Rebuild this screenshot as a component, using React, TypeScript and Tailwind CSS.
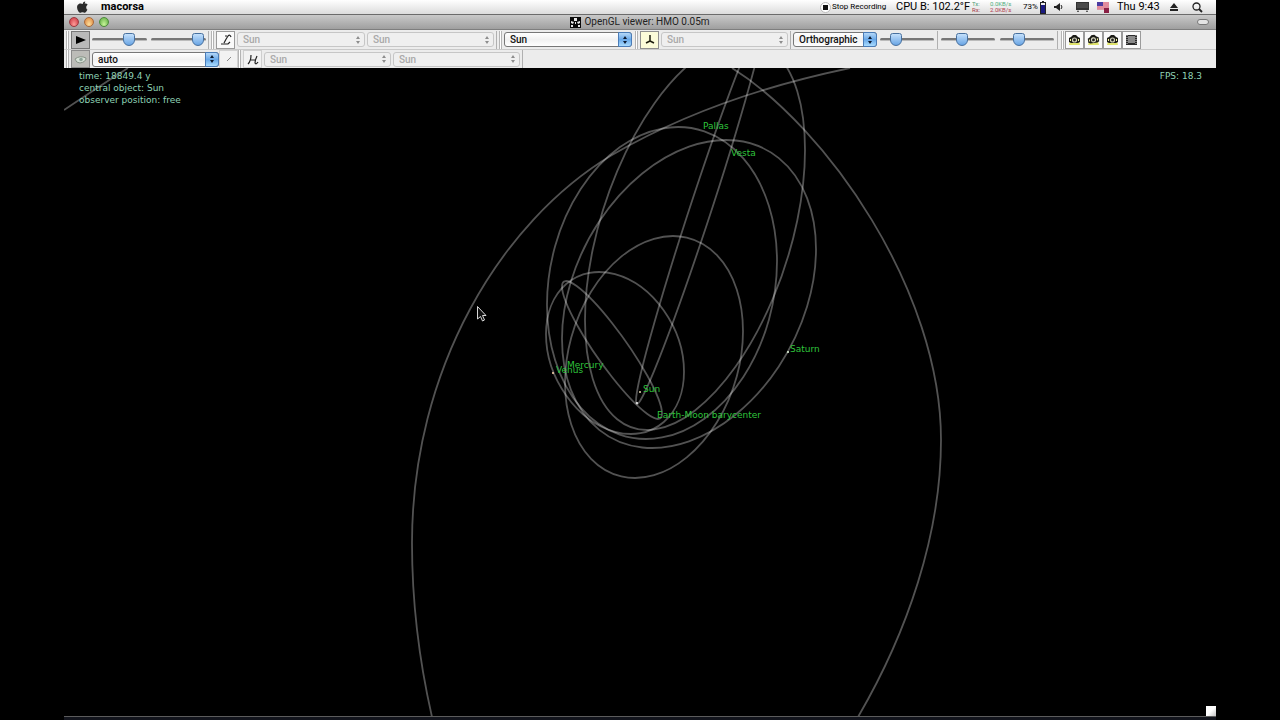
import { useState } from 'react';
import type { ReactNode } from 'react';

interface Orbit {
  cx: number;
  cy: number;
  w: number; // half width of the bounding box
  h: number; // half height of the bounding box
  lean: number; // how far the topmost point sits right of the centre
}

const ORBITS: Orbit[] = [
  { cx: 654, cy: 357, w: 89, h: 121, lean: 19 },
  { cx: 615, cy: 353, w: 69, h: 81, lean: -16 },
  { cx: 662, cy: 283, w: 115, h: 156, lean: 16 },
  { cx: 689, cy: 294, w: 127, h: 154, lean: 37 },
  { cx: 695, cy: 235, w: 110, h: 195, lean: 48 },
  { cx: 612, cy: 350, w: 50, h: 69, lean: -46 },
  { cx: 700, cy: 211, w: 64, h: 193, lean: 63 }
];

const OUTER_ORBITS = [
  'M850 68 C768 85 684 113 612 155 C500 222 412 370 412 543 C412 602 419 660 432 717',
  'M732 68 C826 127 941 290 941 440 C941 535 907 633 858 717',
  'M64 110 C85 96 106 82 128 68'
];

const LABELS = [
  { name: 'Pallas', x: 703, y: 129 },
  { name: 'Vesta', x: 731, y: 156 },
  { name: 'Saturn', x: 790, y: 352 },
  { name: 'Venus', x: 556, y: 373 },
  { name: 'Mercury', x: 567, y: 368 },
  { name: 'Sun', x: 643, y: 392 },
  { name: 'Earth-Moon barycenter', x: 657, y: 418 }
];

const BODIES = [
  { x: 553, y: 373, color: '#ffd9b0' },
  { x: 640, y: 392, color: '#e8d9b0' },
  { x: 637, y: 403, color: '#ffffff' },
  { x: 788, y: 352, color: '#e8ffe0' }
];

function orbitMatrix({ cx, cy, w, h, lean }: Orbit) {
  const skew = (-lean * h) / w;
  const rest = Math.sqrt(h * h - skew * skew);
  return `matrix(${w} ${skew} 0 ${rest} ${cx} ${cy})`;
}

const Handle = () => (
  <div className="h-[18px] w-[3px] shrink-0 border-x border-[#b4b4b4] bg-white" />
);

const Divider = () => <div className="h-[18px] w-px shrink-0 bg-[#b0b0b0]" />;

interface PickerProps {
  label: string;
  value: string;
  width?: string;
  disabled?: boolean;
}

const Picker = ({ label, value, width = 'w-[127px]', disabled = false }: PickerProps) => (
  <div className={`relative h-[15px] shrink-0 ${width}`}>
    <select
      aria-label={label}
      disabled={disabled}
      defaultValue={value}
      className={`block h-[15px] w-full appearance-none rounded-[3px] border pl-[5px] text-[10px] leading-[13px] font-medium opacity-100
        ${disabled
          ? 'border-[#c6c6c6] bg-[#efefef] text-[#a9a9a9]'
          : 'border-[#777] bg-linear-to-b from-white via-[#f1f1f1] to-white text-[#111]'}`}
    >
      <option>{value}</option>
    </select>
    <div
      className={`pointer-events-none absolute top-0 right-0 flex h-[15px] w-[14px] items-center justify-center rounded-r-[3px]
        ${disabled ? '' : 'border border-[#4a7cb8] bg-linear-to-b from-[#b5d8f8] via-[#69a8e8] to-[#a9dcff]'}`}
    >
      <svg className="h-[8px] w-[6px]" viewBox="0 0 6 8" fill={disabled ? '#8d8d8d' : '#0c1a30'}>
        <path d="M3 0 L5 3 H1 Z M3 8 L5 5 H1 Z" />
      </svg>
    </div>
  </div>
);

const Slider = ({ label, start, width = 'w-[54px]' }: { label: string; start: number; width?: string }) => {
  const [value, setValue] = useState(start);
  return (
    <input
      type="range"
      aria-label={label}
      value={value}
      onChange={(e) => setValue(Number(e.target.value))}
      className={`block h-[14px] shrink-0 appearance-none bg-transparent ${width}
        [&::-webkit-slider-runnable-track]:h-[3px] [&::-webkit-slider-runnable-track]:rounded-full [&::-webkit-slider-runnable-track]:border-b [&::-webkit-slider-runnable-track]:border-[#bbb] [&::-webkit-slider-runnable-track]:bg-[#777]
        [&::-webkit-slider-thumb]:-mt-[5px] [&::-webkit-slider-thumb]:h-[13px] [&::-webkit-slider-thumb]:w-[12px] [&::-webkit-slider-thumb]:appearance-none [&::-webkit-slider-thumb]:rounded-[3px_3px_7px_7px] [&::-webkit-slider-thumb]:border [&::-webkit-slider-thumb]:border-[#47709f] [&::-webkit-slider-thumb]:bg-linear-to-b [&::-webkit-slider-thumb]:from-[#c4e0fb] [&::-webkit-slider-thumb]:to-[#69a5e4]`}
    />
  );
};

interface ToolButtonProps {
  label: string;
  look?: string;
  children: ReactNode;
}

const ToolButton = ({ label, look = 'border-[#9b9b9b] bg-[#fafafa]', children }: ToolButtonProps) => (
  <button
    type="button"
    aria-label={label}
    className={`flex h-[18px] w-[19px] shrink-0 items-center justify-center border ${look}`}
  >
    {children}
  </button>
);

const CameraIcon = ({ tilt }: { tilt: number }) => (
  <svg className="h-[14px] w-[15px]" viewBox="0 0 15 14">
    <path d="M2 12 L3 8 H12 L13 12 Z" fill="#dfe36b" />
    <g transform={`rotate(${tilt} 7 7)`}>
      <path d="M2 5 L4 4 L6 2 H9 L11 4 L13 5 V9 L11 10 H4 L2 9 Z" fill="#1b1b16" />
      <circle cx="7.500" cy="7" r="2.600" fill="#d4d4bc" />
      <circle cx="7.500" cy="7" r="1.400" fill="#222" />
      <path d="M3 6 H4 V8 H3 Z M11 6 H12 V8 H11 Z" fill="#f4f49a" />
    </g>
  </svg>
);

const MenuBar = () => (
  <header className="flex h-[15px] shrink-0 items-center border-b border-[#6b6b6b] bg-linear-to-b from-white to-[#dcdcdc] text-black">
    <svg className="ml-[13px] h-[12px] w-[12px]" viewBox="0 0 24 24" fill="#2b2b2b">
      <path d="M16.4 1c.1 1.600-.5 3-1.400 4-1 1.100-2.300 1.800-3.600 1.700-.2-1.500.5-3 1.400-4C13.700 1.700 15.200 1 16.400 1zM21 17.200c-.6 1.300-.9 1.900-1.600 3-1 1.600-2.500 3.500-4.300 3.500-1.600 0-2-1-4.200-1s-2.700 1-4.200 1c-1.800 0-3.200-1.700-4.200-3.300C-.3 16-.6 10.800 1.300 8.100 2.600 6.100 4.700 5 6.700 5c2 0 3.300 1.100 4.900 1.100C13.200 6.100 14.200 5 16.600 5c1.800 0 3.600 1 4.900 2.600-4.300 2.400-3.600 8.500-.5 9.600z" />
    </svg>
    <span className="ml-[12px] text-[11px] leading-[14px] font-bold">macorsa</span>
    <div className="ml-auto flex h-full items-center">
      <div className="flex w-[71px] items-center gap-px">
        <svg className="h-[11px] w-[11px] shrink-0" viewBox="0 0 11 11">
          <circle cx="5.500" cy="5.500" r="5" fill="#fff" stroke="#bbb" />
          <rect x="3" y="3" width="5" height="5" fill="#111" />
        </svg>
        <span className="text-[8px] whitespace-nowrap">Stop Recording</span>
      </div>
      <span className="w-[76px] pl-[5px] text-[11px] whitespace-nowrap">CPU B: 102.2°F</span>
      <div className="flex w-[51px] pl-[5px] text-[6px] leading-[6px]">
        <div className="w-[18px]">
          <p className="text-[#4f9d78]">Tx:</p>
          <p className="text-[#a33a4a]">Rx:</p>
        </div>
        <div>
          <p className="text-[#4fae80]">0.0KB/s</p>
          <p className="text-[#b03a4e]">2.0KB/s</p>
        </div>
      </div>
      <span className="w-[22px] pl-[5px] text-[8px]">73%</span>
      <svg className="mr-[8px] h-[13px] w-[6px]" viewBox="0 0 6 13">
        <path d="M2 0 H4 V1 H6 V13 H0 V1 H2 Z" fill="#222" />
        <rect x="1" y="2" width="4" height="2" fill="#eee" />
        <rect x="1" y="4" width="4" height="8" fill="#1a1a80" />
      </svg>
      <svg className="mr-[12px] h-[8px] w-[10px]" viewBox="0 0 10 8" fill="#222">
        <path d="M0 3 H2 L6 0 V8 L2 5 H0 Z" />
        <path d="M7 2 Q9 4 7 6" fill="none" stroke="#222" />
      </svg>
      <svg className="mr-[8px] h-[10px] w-[13px]" viewBox="0 0 13 10">
        <rect x="0" y="0" width="13" height="8" fill="#333" />
        <rect x="1" y="1" width="11" height="5" fill="#4a4a4a" />
        <path d="M2 8 L1 10 H3 Z M11 8 L10 10 H12 Z" fill="#333" />
      </svg>
      <svg className="mr-[8px] h-[12px] w-[12px]" viewBox="0 0 12 12">
        <rect x="0" y="1" width="12" height="7" fill="#f0c8d0" />
        <path d="M0 2 H12 M0 4 H12 M0 6 H12 M0 8 H12" stroke="#d4506a" />
        <rect x="0" y="1" width="6" height="4" fill="#4b3ba0" />
        <rect x="7" y="7" width="5" height="5" fill="#8a2045" />
      </svg>
      <span className="w-[53px] text-[11px] whitespace-nowrap">Thu 9:43</span>
      <svg className="mr-[14px] h-[8px] w-[8px]" viewBox="0 0 8 8" fill="#222">
        <path d="M4 0 L8 5 H0 Z M0 6 H8 V8 H0 Z" />
      </svg>
      <svg className="mr-[13px] h-[11px] w-[11px]" viewBox="0 0 11 11" fill="none" stroke="#222">
        <circle cx="4.500" cy="4.500" r="3.500" strokeWidth="1.300" />
        <path d="M7 7 L10 10" strokeWidth="1.800" />
      </svg>
    </div>
  </header>
);

const TitleBar = () => (
  <div className="flex h-[15px] shrink-0 items-center border-b border-[#7e7e7e] bg-linear-to-b from-[#c9c9c9] to-[#9f9f9f] px-[5px]">
    <div className="flex flex-1 gap-[5px]">
      <button type="button" aria-label="Close" className="h-[10px] w-[10px] rounded-full border border-[#9a3a40] bg-radial-[at_50%_80%] from-[#ff9c98] to-[#c8303c]" />
      <button type="button" aria-label="Minimize" className="h-[10px] w-[10px] rounded-full border border-[#a8693a] bg-radial-[at_50%_80%] from-[#ffdf9a] to-[#d9803a]" />
      <button type="button" aria-label="Zoom" className="h-[10px] w-[10px] rounded-full border border-[#4d8a3c] bg-radial-[at_50%_80%] from-[#c8f59a] to-[#5aa83e]" />
    </div>
    <div className="flex items-center gap-[3px]">
      <svg className="h-[11px] w-[11px]" viewBox="0 0 11 11">
        <rect width="11" height="11" fill="#0a0a0a" />
        <path d="M4 1 H7 V4 H4 Z M1 4 L4 5 L3 7 L1 6 Z M10 4 L7 5 L8 7 L10 6 Z M1 8 H3 V10 H1 Z M8 8 H10 V10 H8 Z M5 5 H6 V7 H5 Z" fill="#e8e8e8" />
      </svg>
      <h1 className="text-[10px] leading-[14px] text-[#222]">OpenGL viewer: HMO 0.05m</h1>
    </div>
    <div className="flex flex-1 justify-end">
      <button type="button" aria-label="Toggle toolbar" className="mr-[2px] h-[6px] w-[12px] rounded-full border border-[#777] bg-[#e4e4e4]" />
    </div>
  </div>
);

const Toolbar = () => (
  <div className="shrink-0 bg-[#ececec]">
    <div className="flex h-[19px] items-center pl-[2px]">
      <Handle />
      <div className="ml-[2px] flex items-center gap-[2px]">
        <ToolButton label="Play" look="border-[#777] bg-[#b9b9b9]">
          <svg className="h-[8px] w-[10px]" viewBox="0 0 10 8">
            <path d="M0 0 L10 4 L0 8 Z" fill="#000" />
          </svg>
        </ToolButton>
        <Slider label="Time step" start={71} width="w-[55px]" />
      </div>
      <div className="ml-[4px]">
        <Slider label="Speed" start={96} width="w-[55px]" />
      </div>
      <div className="mx-[2px] flex gap-[2px]">
        <Divider />
        <Handle />
      </div>
      <div className="flex items-center gap-[2px]">
        <ToolButton label="Angular momentum">
          <svg className="h-[11px] w-[12px]" viewBox="0 0 12 11" fill="none" stroke="#222">
            <path d="M11 3 Q10 0 8 2 Q6 5 4 9 M5 2 H7 M1 10 H8 L10 8" strokeWidth="1.200" />
          </svg>
        </ToolButton>
        <Picker label="Momentum of" value="Sun" disabled width="w-[128px]" />
        <Picker label="Momentum about" value="Sun" disabled />
        <Divider />
      </div>
      <div className="mx-[2px]">
        <Handle />
      </div>
      <Picker label="Central object" value="Sun" width="w-[128px]" />
      <div className="mr-[2px] ml-[3px]">
        <Handle />
      </div>
      <div className="flex items-center gap-[2px]">
        <ToolButton label="Axes" look="border-[#8f8f8f] bg-[#fbfbd9]">
          <svg className="h-[10px] w-[10px]" viewBox="0 0 10 10" fill="none" stroke="#1d1d10" strokeWidth="1.500">
            <path d="M5 0 V6 M5 6 L1 8 M5 6 L9 8" />
          </svg>
        </ToolButton>
        <Picker label="Frame" value="Sun" disabled />
        <Divider />
      </div>
      <div className="ml-[2px] flex items-center gap-[3px]">
        <Picker label="Projection" value="Orthographic" width="w-[84px]" />
        <Slider label="Field of view" start={24} />
        <Divider />
        <Slider label="Zoom level" start={36} />
      </div>
      <div className="ml-[5px] flex items-center gap-[3px]">
        <Slider label="Orbit length" start={32} />
        <Divider />
        <Handle />
      </div>
      <div className="ml-px flex">
        <ToolButton label="Snapshot">
          <CameraIcon tilt={0} />
        </ToolButton>
        <ToolButton label="Snapshot series">
          <CameraIcon tilt={-8} />
        </ToolButton>
        <ToolButton label="Snapshot options">
          <CameraIcon tilt={0} />
        </ToolButton>
        <ToolButton label="Record movie">
          <svg className="h-[10px] w-[11px]" viewBox="0 0 11 10">
            <rect width="11" height="10" fill="#2a2a2a" />
            <rect x="2" y="1" width="7" height="7" fill="#8a8a8a" />
            <path d="M1 0 V10 M10 0 V10" stroke="#ccc" strokeDasharray="1 1" />
          </svg>
        </ToolButton>
      </div>
    </div>
    <div className="flex h-[19px] items-center border-t border-[#c9c9c9] pl-[2px]">
      <Handle />
      <div className="ml-[2px] flex items-center gap-[2px]">
        <ToolButton label="Observer" look="border-[#8b8b8b] bg-[#bcbcb8]">
          <svg className="h-[9px] w-[13px]" viewBox="0 0 13 9" fill="none">
            <path d="M1 4 Q6 0 12 3 Q12 7 6 8 Q2 8 1 4 Z" fill="#d8e2d8" stroke="#889488" />
            <circle cx="7" cy="4.500" r="1.800" fill="#8fa59a" />
          </svg>
        </ToolButton>
        <Picker label="Observer position" value="auto" />
      </div>
      <ToolButton label="Pick line" look="border-[#d2d2d2] bg-[#f2f2f2]">
        <svg className="h-[6px] w-[6px]" viewBox="0 0 6 6" stroke="#888">
          <path d="M1 5 L5 1" />
        </svg>
      </ToolButton>
      <Handle />
      <div className="ml-[2px] flex items-center gap-[2px]">
        <ToolButton label="Hamiltonian" look="border-[#cfcfcf] bg-[#f2f2f2]">
          <svg className="h-[11px] w-[12px]" viewBox="0 0 12 11" fill="none" stroke="#222">
            <path d="M4 1 Q4 7 1 10 M3 6 H8 M10 2 Q8 6 8 9 Q9 11 11 8" strokeWidth="1.200" />
          </svg>
        </ToolButton>
        <Picker label="Energy of" value="Sun" disabled />
        <Picker label="Energy about" value="Sun" disabled />
        <Divider />
      </div>
    </div>
  </div>
);

const Viewer = () => (
  <main className="relative min-h-0 flex-1 overflow-hidden border-b border-[#5c5c5c] bg-black font-['DejaVu_Sans',sans-serif]">
    <svg className="block h-full w-full" viewBox="64 68 1152 648" preserveAspectRatio="xMinYMin slice">
      <g fill="none" stroke="#ffffff" strokeOpacity="0.32" strokeWidth="1.800">
        {ORBITS.map((orbit, i) => (
          <circle key={i} r="1" transform={orbitMatrix(orbit)} vectorEffect="non-scaling-stroke" />
        ))}
        {OUTER_ORBITS.map((d) => (
          <path key={d} d={d} />
        ))}
      </g>
      {BODIES.map((body) => (
        <circle key={body.x} cx={body.x} cy={body.y} r="1" fill={body.color} />
      ))}
      <g className="text-[9px]" fill="#2fc43c">
        {LABELS.map((label) => (
          <text key={label.name} x={label.x} y={label.y}>
            {label.name}
          </text>
        ))}
      </g>
      <path
        d="M477.500 306.500 V319 L480.500 316.500 L482.500 321 L484.500 320 L482.500 315.500 H486 Z"
        fill="#111"
        stroke="#d8d8d8"
      />
    </svg>
    <div className="absolute top-[2px] left-[15px] text-[9px] leading-[12px] text-[#8fd3b6]">
      <p>time: 18849.4 y</p>
      <p>central object: Sun</p>
      <p>observer position: free</p>
    </div>
    <p className="absolute top-[2px] right-[14px] text-[9px] leading-[12px] text-[#8fd3b6]">FPS: 18.3</p>
    <div className="absolute right-0 bottom-0 h-[10px] w-[10px] bg-linear-to-br from-white from-50% to-[#c4c4c4]" />
  </main>
);

function App() {
  return (
    <div className="h-screen bg-black px-[5%] font-[Roboto,sans-serif]">
      <div className="flex h-full flex-col">
        <MenuBar />
        <TitleBar />
        <Toolbar />
        <Viewer />
        <div className="h-[3px] shrink-0 bg-[#12141c]" />
      </div>
    </div>
  );
}

export default App;
